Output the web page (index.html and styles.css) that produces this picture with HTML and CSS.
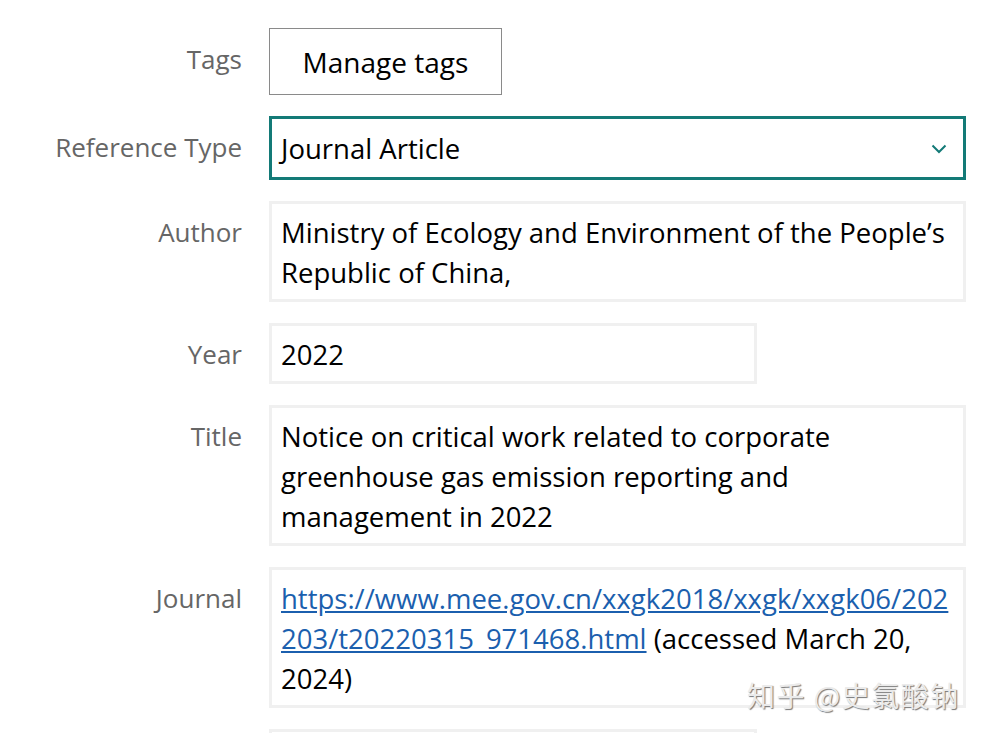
FILE: index.html
```html
<!DOCTYPE html>
<html>
<head>
<meta charset="utf-8"/>
<title>Reference</title>
<link rel="stylesheet" href="styles.css">
</head>
<body>

<div class="form">
	<div class="label">Tags</div>
	<div><button class="tagbtn">Manage tags</button></div>

	<div class="label">Reference Type</div>
	<div class="select">
		<span>Journal Article</span>
		<svg class="chev" width="16" height="10" viewBox="0 0 16 10"><path d="M1.5 1.5 L8 8 L14.5 1.5" fill="none" stroke="#137a77" stroke-width="2"/></svg>
	</div>

	<div class="label">Author</div>
	<div class="field">Ministry of Ecology and Environment of the People’s Republic of China,</div>

	<div class="label">Year</div>
	<div class="field short">2022</div>

	<div class="label">Title</div>
	<div class="field">Notice on critical work related to corporate greenhouse gas emission reporting and management in 2022</div>

	<div class="label">Journal</div>
	<div class="field"><a href="https://www.mee.gov.cn/xxgk2018/xxgk/xxgk06/202203/t20220315_971468.html">https://www.mee.gov.cn/xxgk2018/xxgk/xxgk06/202203/t20220315_971468.html</a> (accessed March 20, 2024)</div>

	<div class="label"></div>
	<div class="field short">&nbsp;</div>
</div>

<div class="mark">知乎 @史氯酸钠</div>

</body>
</html>
```

FILE: styles.css
```css
body {
	margin: 0;
	background: white;
	font-family: "Open Sans", "Noto Sans", sans-serif;
	font-size: 26px;
	color: #111;
	overflow: hidden;
}
.form {
	display: grid;
	grid-template-columns: 242px 697px;
	column-gap: 27px;
	row-gap: 21px;
	padding-top: 28px;
}
.label {
	text-align: right;
	color: #666;
	line-height: 40px;
	padding-top: 11px;
}
.tagbtn {
	width: 233px;
	height: 67px;
	background: white;
	border: 1px solid #8a8a8a;
	font-family: inherit;
	font-size: 28px;
	color: #000;
	padding: 0;
}
.select {
	display: flex;
	align-items: center;
	justify-content: space-between;
	border: 3px solid #137a77;
	padding: 10px 16px 8px 9px;
	font-size: 27.5px;
	color: #000;
	line-height: 40px;
}
.field {
	border: 3px solid #f0f0f0;
	padding: 9px 9px 6px 9px;
	font-size: 27.5px;
	color: #000;
	line-height: 40px;
	overflow-wrap: break-word;
}
.field a {
	color: #1b5fae;
}
.short {
	width: 464px;
}
.mark {
	position: absolute;
	left: 747px;
	top: 675px;
	font-family: "Noto Sans CJK SC", sans-serif;
	font-size: 28px;
	color: #ebebeb;
	text-shadow: 1px 1px 1px #777;
	letter-spacing: 1.5px;
}
```
